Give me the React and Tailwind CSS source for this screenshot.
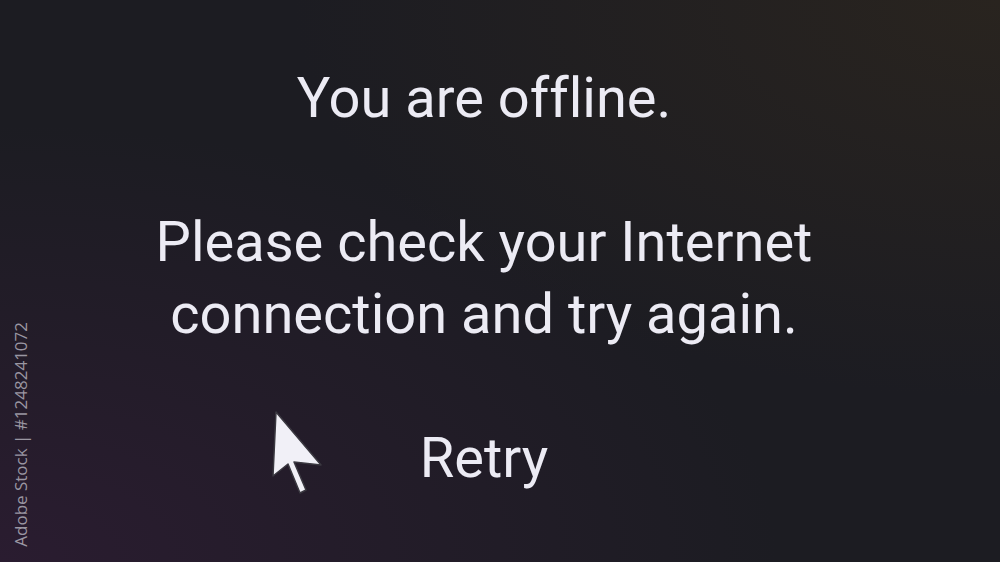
export default function App() {
  return (
    <div className="relative w-[1000px] h-[562px] overflow-hidden bg-[#1c1c22] font-['Roboto',sans-serif] text-[#ecebf4]">
      <div className="absolute inset-0 bg-[radial-gradient(ellipse_at_0%_100%,#2a1c30_0%,transparent_55%)]" />
      <div className="absolute inset-0 bg-[radial-gradient(ellipse_at_100%_0%,#29241f_0%,transparent_50%)]" />

      <div className="relative flex flex-col items-center pt-[62px] pr-[32px] gap-[72px] text-[56px] leading-[72px] text-center [font-variant-ligatures:none]">
        <p>You are offline.</p>
        <p>
          Please check your Internet
          <br />
          connection and try again.
        </p>
        <p>Retry</p>
      </div>

      {/* mouse pointer */}
      <svg
        className="absolute left-[270px] top-[408px]"
        width="56"
        height="90"
        viewBox="-6 -4 56 90"
      >
        <path
          d="M0 0 L-3 64 L12 52 L24 81 L30 78 L18 50 L45 53 Z"
          fill="#f1f0f7"
          stroke="#3a3840"
          strokeWidth="1.5"
          strokeLinejoin="round"
        />
      </svg>

      <span className="absolute left-[-92px] top-[421px] w-[226px] -rotate-90 text-[17px] text-[#9a96a2] font-['Open_Sans',sans-serif] whitespace-nowrap">
        Adobe Stock | #1248241072
      </span>
    </div>
  );
}
